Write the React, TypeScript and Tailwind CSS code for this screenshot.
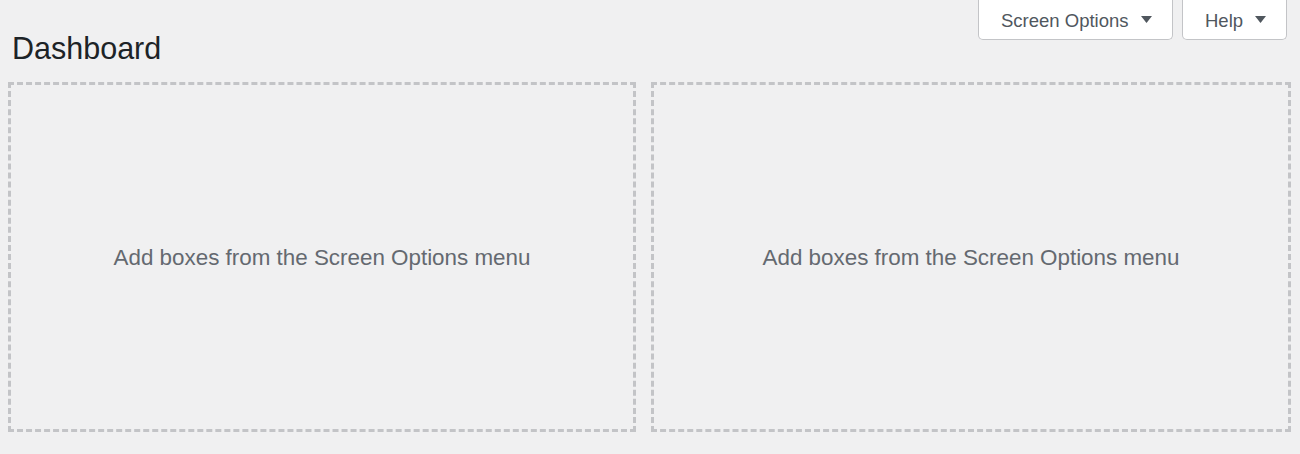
export default function App() {
  const font = { fontFamily: '"Liberation Sans", Arial, sans-serif' };

  return (
    <div className="min-h-[454px] w-[1300px] bg-[#f0f0f1]" style={font}>
      {/* Header: title + screen meta links */}
      <div className="flex h-[82px] items-start justify-between">
        <h1 className="ml-[12px] mt-[33px] text-[30.5px] font-normal leading-[30px] text-[#1d2327]">
          Dashboard
        </h1>
        <div className="mr-[13px] flex gap-[9px]">
          <MetaButton label="Screen Options" width="w-[195px]" />
          <MetaButton label="Help" width="w-[105px]" />
        </div>
      </div>

      {/* Empty widget columns */}
      <div className="ml-[8px] flex gap-[15px]">
        <EmptyColumn width="w-[628px]" />
        <EmptyColumn width="w-[640px]" />
      </div>
    </div>
  );
}

function MetaButton({ label, width }: { label: string; width: string }) {
  return (
    <button
      className={`${width} flex h-[40px] items-center rounded-b-[5px] border border-t-0 border-[#c3c4c7] bg-white pl-[22px] pt-[2px] text-[18.5px] text-[#50575e]`}
    >
      <span>{label}</span>
      <svg width="11" height="7" viewBox="0 0 11 7" className="ml-[12px] -mt-[2px]">
        <polygon points="0,0 11,0 5.5,7" fill="#50575e" />
      </svg>
    </button>
  );
}

function EmptyColumn({ width }: { width: string }) {
  return (
    <div
      className={`${width} flex h-[350px] items-center justify-center border-[3px] border-dashed border-[#c3c4c7]`}
    >
      <span className="pt-[2px] text-[22.4px] text-[#646970]">
        Add boxes from the Screen Options menu
      </span>
    </div>
  );
}
